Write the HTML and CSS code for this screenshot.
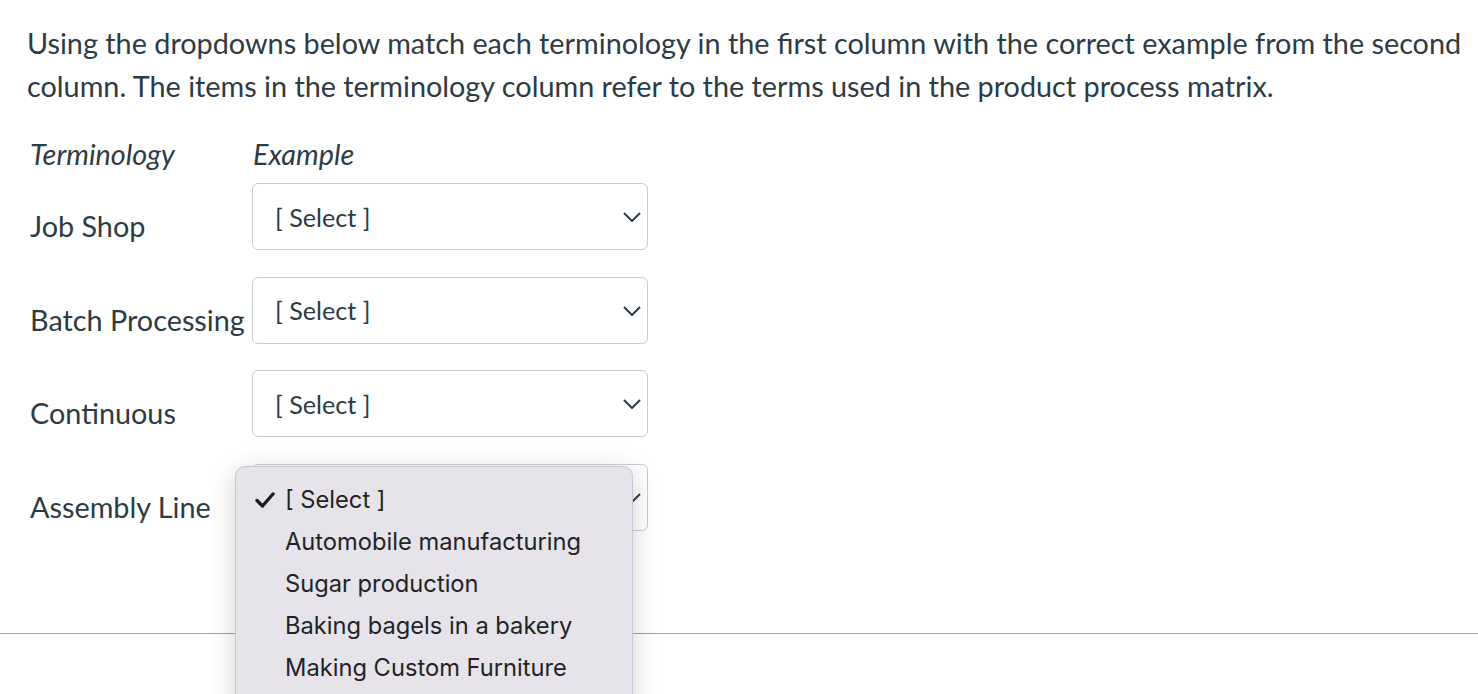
FILE: index.html
```html
<!DOCTYPE html>
<html lang="en">
<head>
    <meta charset="UTF-8">
    <title>Matching Question</title>
<link rel="stylesheet" href="styles.css">
</head>
<body>
    <div class="question">
        <p class="question-text">Using the dropdowns below match each terminology in the first column with the correct example from the second column. The items in the terminology column refer to the terms used in the product process matrix.</p>

        <!-- Matching grid -->
        <div class="match">
            <div class="match-head">Terminology</div>
            <div class="match-head">Example</div>

            <div class="match-term">Job Shop</div>
            <div class="select-wrap">
                <select><option>[ Select ]</option></select>
                <svg class="chevron" viewBox="0 0 18 10"><path d="M1 1 L9 9 L17 1" /></svg>
            </div>

            <div class="match-term">Batch Processing</div>
            <div class="select-wrap">
                <select><option>[ Select ]</option></select>
                <svg class="chevron" viewBox="0 0 18 10"><path d="M1 1 L9 9 L17 1" /></svg>
            </div>

            <div class="match-term">Continuous</div>
            <div class="select-wrap">
                <select><option>[ Select ]</option></select>
                <svg class="chevron" viewBox="0 0 18 10"><path d="M1 1 L9 9 L17 1" /></svg>
            </div>

            <div class="match-term">Assembly Line</div>
            <div class="select-wrap">
                <select><option>[ Select ]</option></select>
                <svg class="chevron" viewBox="0 0 18 10"><path d="M1 1 L9 9 L17 1" /></svg>
                <!-- open options menu -->
                <ul class="menu">
                    <li class="checked">
                        <svg class="check" viewBox="0 0 20 16"><path d="M2 8.5 L7.5 14 L18 2" /></svg>
                        [ Select ]
                    </li>
                    <li>Automobile manufacturing</li>
                    <li>Sugar production</li>
                    <li>Baking bagels in a bakery</li>
                    <li>Making Custom Furniture</li>
                </ul>
            </div>
        </div>
    </div>
    <hr class="divider">
</body>
</html>
```

FILE: styles.css
```css
* {
    box-sizing: border-box;
    margin: 0;
    padding: 0;
}

html {
    overflow: hidden;
}

body {
    font-family: Lato, "Liberation Sans", sans-serif;
    color: #2d3b45;
    background-color: #fff;
    height: 100vh;
    overflow: hidden;
}

.question {
    padding: 22px 0 0 27px;
}

.question-text {
    font-size: 28.8px;
    line-height: 43px;
}

.match {
    display: grid;
    grid-template-columns: 225px 396px;
    margin-top: 25px;
}

.match-head {
    font-style: italic;
    font-size: 28.8px;
    line-height: 43px;
    padding-left: 3px;
    margin-bottom: 7px;
}
.match-head + .match-head {
    padding-left: 1px;
}

.match-term {
    font-size: 28.8px;
    line-height: 43px;
    padding: 22px 0 0 3px;
    white-space: nowrap;
}

.select-wrap {
    position: relative;
    margin-bottom: 26.5px;
}

select {
    appearance: none;
    -webkit-appearance: none;
    display: block;
    width: 396px;
    height: 67px;
    padding: 0 40px 0 22px;
    font-family: Lato, "Liberation Sans", sans-serif;
    font-size: 25.2px;
    color: #2d3b45;
    background-color: #fff;
    border: 1px solid #c7cdd1;
    border-radius: 6px;
}

.chevron {
    position: absolute;
    right: 7px;
    top: 29px;
    width: 18px;
    height: 10px;
    fill: none;
    stroke: #2d3b45;
    stroke-width: 2;
}

.menu {
    position: absolute;
    left: -17px;
    top: 2px;
    width: 398px;
    height: 260px;
    list-style: none;
    padding-top: 12px;
    background-color: #e6e4ea;
    border: 1px solid #cac8ce;
    border-radius: 10px;
    box-shadow: 0 6px 28px rgba(0, 0, 0, 0.18);
    font-family: Inter, "Noto Sans", sans-serif;
    font-size: 23.7px;
    color: #232325;
    z-index: 2;
}

.menu li {
    position: relative;
    height: 42px;
    line-height: 42px;
    padding-left: 49px;
}

.check {
    position: absolute;
    left: 19px;
    top: 13px;
    width: 20px;
    height: 16px;
    fill: none;
    stroke: #1c1c1e;
    stroke-width: 3.4;
    stroke-linecap: round;
    stroke-linejoin: round;
}

.divider {
    border: none;
    border-top: 1px solid #a3a3a3;
    margin-top: 76px;
}
```
